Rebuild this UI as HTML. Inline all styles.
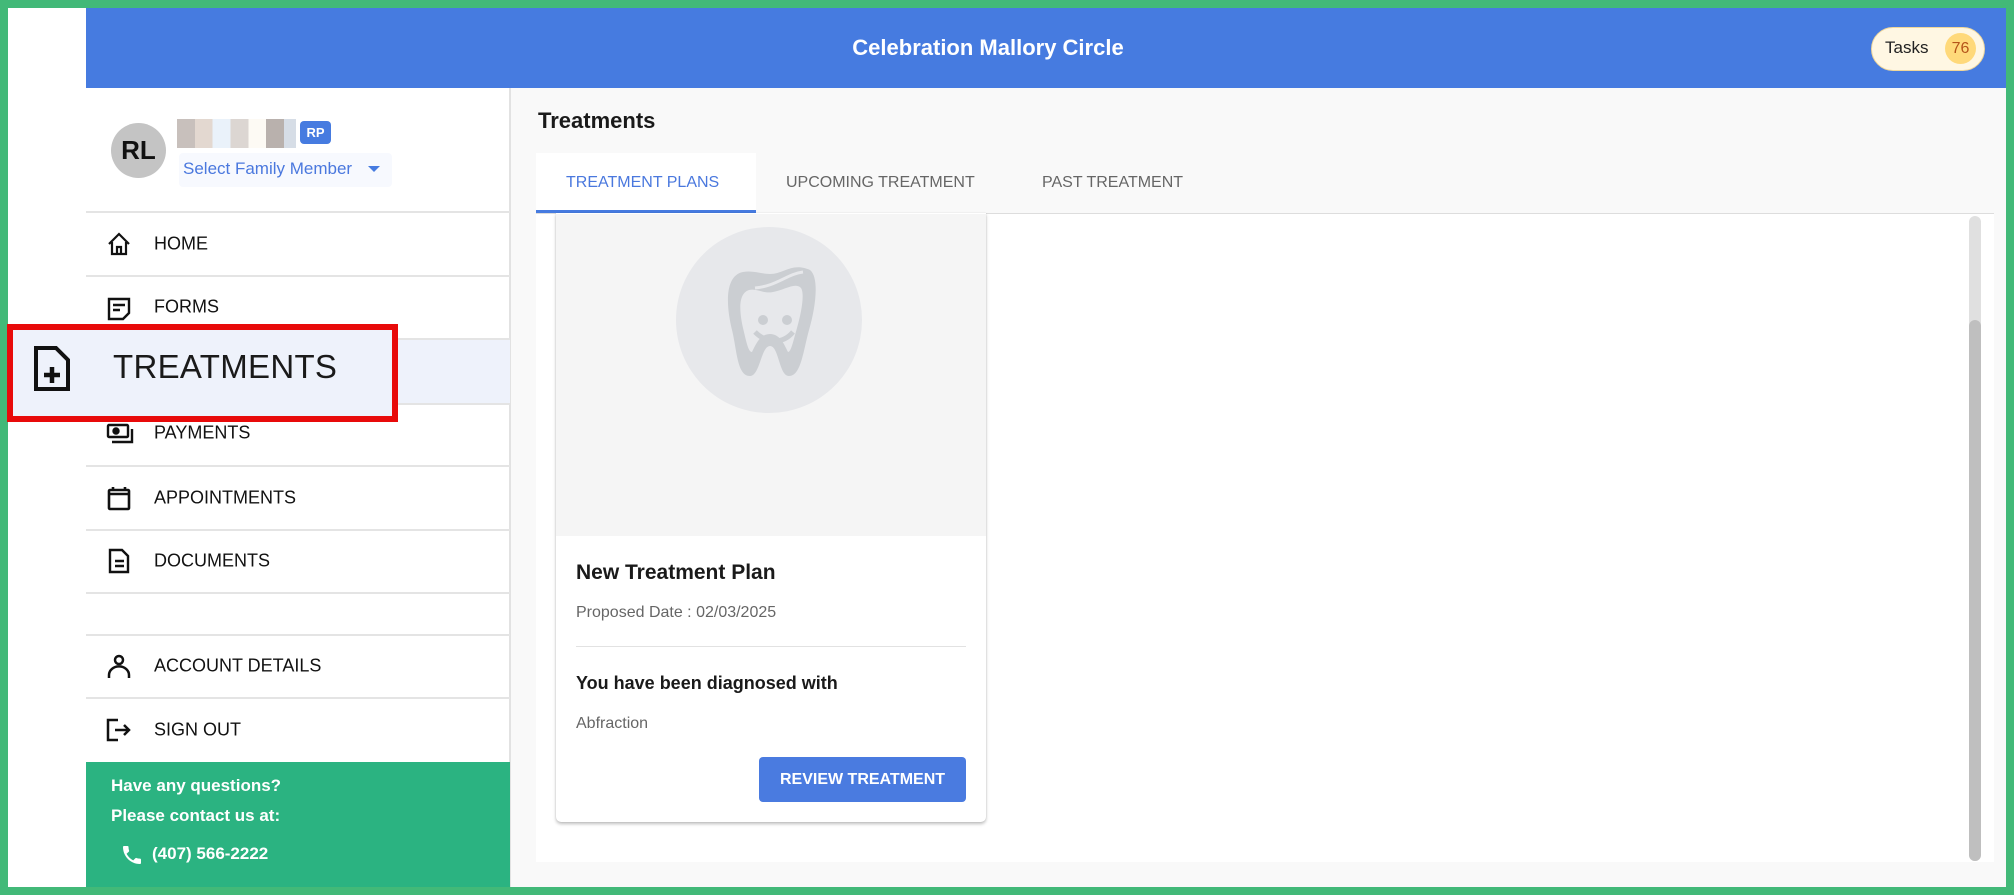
<!DOCTYPE html>
<html><head><meta charset="utf-8"><style>
*{margin:0;padding:0;box-sizing:border-box}
body{width:2014px;height:895px;background:#42b978;position:relative;overflow:hidden;font-family:"Liberation Sans",Arial,sans-serif;color:#1a1a1a}
.a{position:absolute}
.nav{position:absolute;left:154px;font-size:18px;color:#111;transform:translateY(-50%)}
.div{position:absolute;left:86px;width:424px;height:2px;background:#e4e4e4}
.ic{position:absolute;left:106px;width:26px;height:26px}
</style></head><body>
<div class="a" style="left:8px;top:8px;width:1998px;height:879px;background:#fff"></div>
<div class="a" style="left:86px;top:8px;width:1920px;height:80px;background:#467be0"></div>
<div class="a" style="left:843px;top:30px;width:290px;text-align:center;color:#fff;font-weight:bold;font-size:22px;line-height:36px;white-space:nowrap">Celebration Mallory Circle</div>
<div class="a" style="left:1871px;top:27px;width:114px;height:44px;border-radius:22px;background:#fff7e3;border:1px solid #f0d79a"></div>
<div class="a" style="left:1885px;top:38px;font-size:17px;color:#222">Tasks</div>
<div class="a" style="left:1945px;top:33px;width:31px;height:31px;border-radius:50%;background:#ffd97a;color:#b5541a;font-size:16px;text-align:center;line-height:31px">76</div>
<div class="a" style="left:511px;top:88px;width:1495px;height:799px;background:#f9f9f9"></div>
<div class="a" style="left:509px;top:88px;width:2px;height:799px;background:#e2e2e2"></div>
<div class="a" style="left:111px;top:123px;width:55px;height:55px;border-radius:50%;background:#c4c4c4;font-size:26px;text-align:center;line-height:55px;color:#111;font-weight:bold">RL</div>
<div class="a" style="left:177px;top:119px;width:119px;height:29px;background:linear-gradient(90deg,#c8c0bc 0 15%,#e3d8d0 15% 30%,#eaf2fa 30% 45%,#dcd6d2 45% 60%,#fdfaf4 60% 75%,#b9b1ad 75% 90%,#d6dde6 90%)"></div>
<div class="a" style="left:300px;top:121px;width:31px;height:23px;border-radius:4px;background:#467be0;color:#fff;font-size:13px;font-weight:bold;text-align:center;line-height:23px">RP</div>
<div class="a" style="left:179px;top:153px;width:213px;height:34px;border-radius:4px;background:#f7f9fe"></div>
<div class="a" style="left:183px;top:159px;font-size:17px;color:#4a78de">Select Family Member</div>
<div class="a" style="left:368px;top:166px;border-left:6px solid transparent;border-right:6px solid transparent;border-top:6px solid #467be0"></div>
<div class="div" style="top:211px"></div>
<svg class="ic" style="top:231px" viewBox="0 0 26 26" fill="none" stroke="#111" stroke-width="2.2"><path d="M3 13L13 3l10 10M6 11v12h14V11M11 23v-7h4v7"/></svg>
<div class="nav" style="top:244px">HOME</div>
<div class="div" style="top:275px"></div>
<svg class="ic" style="top:296px" viewBox="0 0 26 26" fill="none" stroke="#111" stroke-width="2.4"><path d="M3 3h20v14l-6 6H3zM7 9h12M7 14h7"/></svg>
<div class="nav" style="top:307px">FORMS</div>
<div class="div" style="top:338px"></div>
<div class="a" style="left:86px;top:340px;width:424px;height:63px;background:#eef2fb"></div>
<div class="div" style="top:403px"></div>
<svg class="ic" style="top:420px;width:28px" viewBox="0 0 28 26" fill="none" stroke="#111" stroke-width="2.4"><rect x="2" y="5" width="20" height="12" rx="1"/><circle cx="10" cy="11" r="2.5" fill="#111"/><path d="M26 9v13H6"/></svg>
<div class="nav" style="top:433px">PAYMENTS</div>
<div class="div" style="top:465px"></div>
<svg class="ic" style="top:485px" viewBox="0 0 26 26" fill="none" stroke="#111" stroke-width="2.6"><rect x="3" y="5" width="20" height="19" rx="1"/><path d="M3 9h20M7 2v4M19 2v4"/></svg>
<div class="nav" style="top:498px">APPOINTMENTS</div>
<div class="div" style="top:529px"></div>
<svg class="ic" style="top:548px" viewBox="0 0 26 26" fill="none" stroke="#111" stroke-width="2.4"><path d="M4 2h12l6 6v16H4zM9 13h9M9 18h9"/></svg>
<div class="nav" style="top:561px">DOCUMENTS</div>
<div class="div" style="top:592px"></div>
<div class="div" style="top:634px"></div>
<svg class="ic" style="top:653px" viewBox="0 0 26 26" fill="none" stroke="#111" stroke-width="2.5"><circle cx="13" cy="7" r="4"/><path d="M3 25v-3a7 6 0 0 1 20 0v3"/></svg>
<div class="nav" style="top:666px">ACCOUNT DETAILS</div>
<div class="div" style="top:697px"></div>
<svg class="ic" style="top:717px" viewBox="0 0 26 26" fill="none" stroke="#111" stroke-width="2.5"><path d="M12 3H2v20h10M9 13h14M18 8l5 5-5 5"/></svg>
<div class="nav" style="top:730px">SIGN OUT</div>
<div class="a" style="left:86px;top:762px;width:424px;height:125px;background:#2bb381"></div>
<div class="a" style="left:111px;top:776px;color:#fff;font-weight:bold;font-size:17px">Have any questions?</div>
<div class="a" style="left:111px;top:806px;color:#fff;font-weight:bold;font-size:17px">Please contact us at:</div>
<svg class="a" style="left:120px;top:843px" width="24" height="24" viewBox="0 0 24 24"><path fill="#fff" d="M6.6 10.8c1.4 2.8 3.8 5.1 6.6 6.6l2.2-2.2c.3-.3.7-.4 1-.2 1.1.4 2.3.6 3.6.6.6 0 1 .4 1 1V20c0 .6-.4 1-1 1C10.6 21 3 13.4 3 4c0-.6.4-1 1-1h3.5c.6 0 1 .4 1 1 0 1.3.2 2.5.6 3.6.1.3 0 .7-.2 1z"/></svg>
<div class="a" style="left:152px;top:844px;color:#fff;font-weight:bold;font-size:17px">(407) 566-2222</div>
<div class="a" style="left:7px;top:324px;width:391px;height:98px;border:6px solid #e80a0a;background:#eef2fb"></div>
<svg class="a" style="left:33px;top:345px" width="38" height="47" viewBox="0 0 38 47" fill="none" stroke="#111" stroke-width="4"><path d="M3 3h20l12 12v29H3z"/><path d="M19 22v16M11 30h16" stroke-width="4.5"/></svg>
<div class="a" style="left:113px;top:348px;font-size:33px;color:#1a1a1a;letter-spacing:0.3px">TREATMENTS</div>
<div class="a" style="left:538px;top:108px;font-size:22px;font-weight:bold;color:#1a1a1a">Treatments</div>
<div class="a" style="left:536px;top:153px;width:220px;height:60px;background:#fff"></div>
<div class="a" style="left:536px;top:210px;width:220px;height:3px;background:#467be0"></div>
<div class="a" style="left:536px;top:213px;width:1458px;height:1px;background:#ddd"></div>
<div class="a" style="left:566px;top:174px;font-size:16px;color:#4a78de">TREATMENT PLANS</div>
<div class="a" style="left:786px;top:174px;font-size:16px;color:#666">UPCOMING TREATMENT</div>
<div class="a" style="left:1042px;top:174px;font-size:16px;color:#666">PAST TREATMENT</div>
<div class="a" style="left:536px;top:214px;width:1458px;height:648px;background:#fff"></div>
<div class="a" style="left:1969px;top:216px;width:12px;height:645px;border-radius:6px;background:#e0e0e0"></div>
<div class="a" style="left:1969px;top:320px;width:12px;height:541px;border-radius:6px;background:#bfbfbf"></div>
<div class="a" style="left:556px;top:213px;width:430px;height:609px;background:#fff;border-radius:0 0 5px 5px;box-shadow:0 2px 3px rgba(0,0,0,.25),0 0 1px rgba(0,0,0,.15)"></div>
<div class="a" style="left:556px;top:214px;width:430px;height:322px;background:#f5f5f5"></div>
<div class="a" style="left:676px;top:227px;width:186px;height:186px;border-radius:50%;background:#e7e8eb"></div>
<svg class="a" style="left:715px;top:260px" width="110" height="125" viewBox="0 0 110 125">
<path fill="#cbced2" fill-rule="evenodd" d="M28 12c10-2 18 2 27 2 14 0 22-12 40-4 10 8 5 40-1 60-6 22-8 46-20 46-10 0-10-30-19-30s-10 30-20 30C22 116 22 90 17 70 12 50 8 16 28 12zM34 30c8-2 14 4 24 2 12-2 22-10 28-4 4 6 0 26-4 40-4 14-6 24-9 24-4-8-8-18-18-18s-14 10-18 18c-4 0-6-12-9-24-3-14-6-34 6-38z"/>
<circle cx="48" cy="60" r="5" fill="#cbced2"/><circle cx="72" cy="60" r="5" fill="#cbced2"/>
<path d="M40 72c12 12 28 12 38 0" stroke="#cbced2" stroke-width="5" fill="none"/>
<path d="M40 28c22-2 32-14 48-16" stroke="#e7e8eb" stroke-width="3" fill="none"/></svg>
<div class="a" style="left:576px;top:561px;font-size:21px;font-weight:bold;color:#1a1a1a">New Treatment Plan</div>
<div class="a" style="left:576px;top:604px;font-size:16px;color:#666">Proposed Date : 02/03/2025</div>
<div class="a" style="left:576px;top:646px;width:390px;height:1px;background:#e2e2e2"></div>
<div class="a" style="left:576px;top:673px;font-size:18px;font-weight:bold;color:#1a1a1a">You have been diagnosed with</div>
<div class="a" style="left:576px;top:715px;font-size:16px;color:#666">Abfraction</div>
<div class="a" style="left:759px;top:757px;width:207px;height:45px;border-radius:4px;background:#4a7be0;color:#fff;font-weight:bold;font-size:16px;text-align:center;line-height:45px">REVIEW TREATMENT</div>
</body></html>
